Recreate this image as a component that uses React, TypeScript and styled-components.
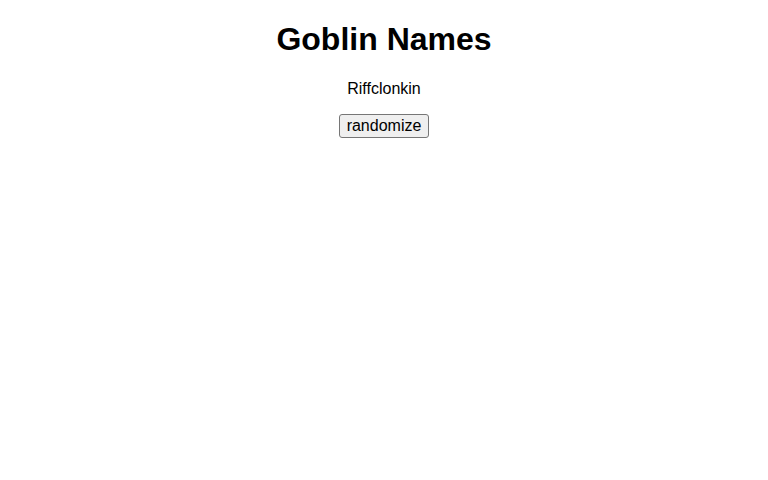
import React, { useState } from "react";
import styled, { createGlobalStyle } from "styled-components";

const GlobalStyle = createGlobalStyle`
  html, body {
    margin: 0;
    padding: 0;
    background: #ffffff;
  }
  body {
    font-family: "Liberation Sans", Arial, sans-serif;
    color: #000000;
  }
`;

const Page = styled.main`
  text-align: center;
  font-family: "Liberation Sans", Arial, sans-serif;
  padding: 0 8px;
`;

const Title = styled.h1`
  font-size: 32px;
  font-weight: bold;
  margin: 21.44px 0;
`;

const Name = styled.p`
  font-size: 16px;
  margin: 16px 0;
`;

const RandomButton = styled.button`
  font-family: "Liberation Sans", Arial, sans-serif;
  font-size: 16px;
  color: #000000;
  background: #efefef;
  border: 1px solid #767676;
  border-radius: 3px;
  padding: 2px 7px;
  line-height: normal;
  cursor: pointer;
`;

const names = ["Riffclonkin", "Snagglewort", "Grubnik", "Mudwhistle", "Krankle"];

export default function App() {
  const [name, setName] = useState(names[0]);
  return (
    <>
      <GlobalStyle />
      <Page>
        <Title>Goblin Names</Title>
        <Name>{name}</Name>
        <RandomButton
          onClick={() => setName(names[Math.floor(Math.random() * names.length)])}
        >
          randomize
        </RandomButton>
      </Page>
    </>
  );
}
